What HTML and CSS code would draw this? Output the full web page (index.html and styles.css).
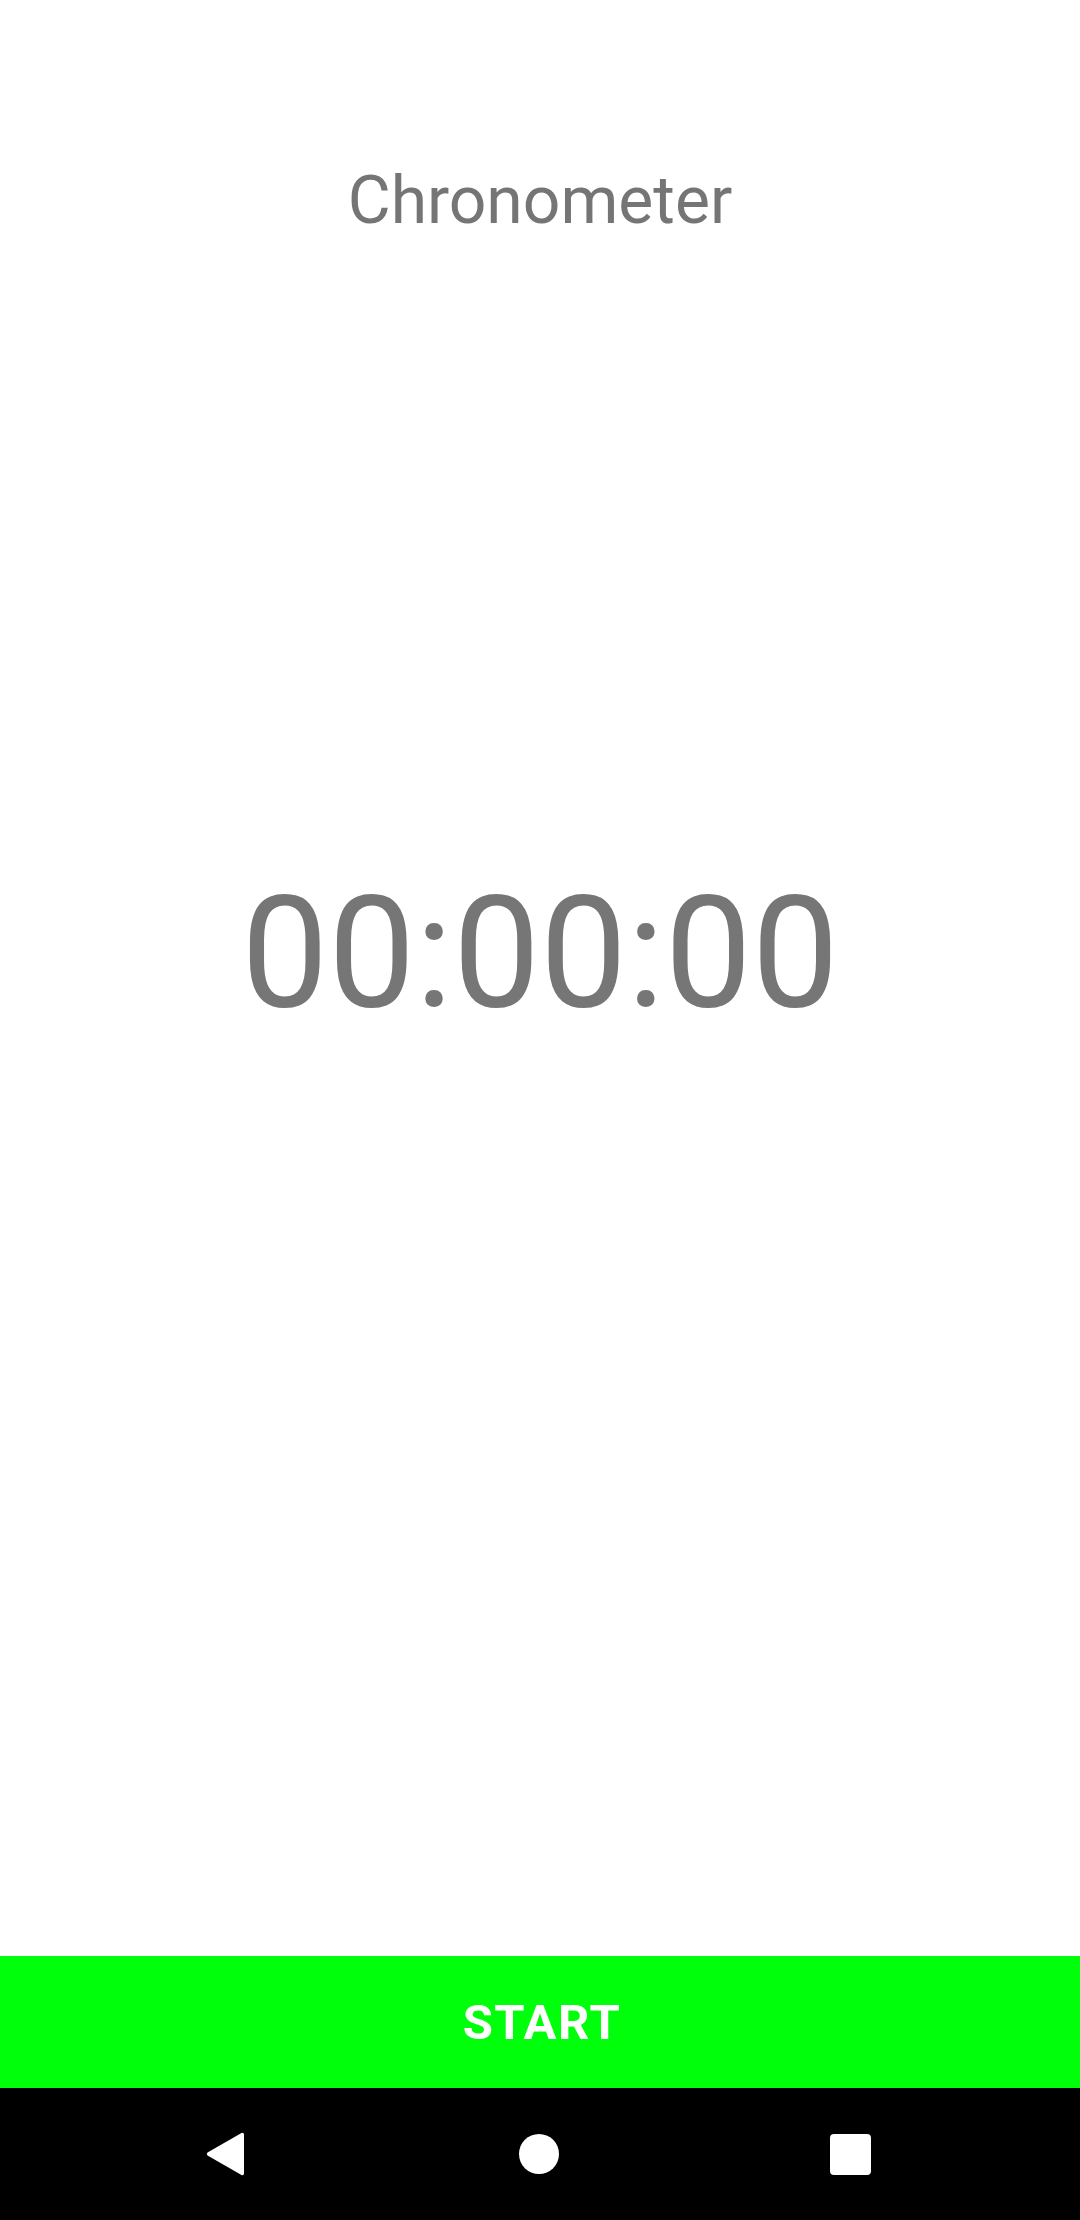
FILE: index.html
```html
<!DOCTYPE html>
<html lang="en">
<head>
<meta charset="utf-8">
<title>Chronometer</title>
<link rel="stylesheet" href="styles.css">
</head>
<body>
<div class="app">
  <header class="title">Chronometer</header>
  <main class="content">
    <div class="timer">00:00:00</div>
  </main>
  <button class="start">START</button>
  <nav class="navbar">
    <svg class="nav-back" viewBox="0 0 38 44" width="38" height="44">
      <path d="M35.5 1 Q38 0 38 3 L38 41 Q38 44 35.5 43 L1.5 23.5 Q0 22 1.5 20.5 Z" fill="#fff"/>
    </svg>
    <svg class="nav-home" viewBox="0 0 40 40" width="40" height="40">
      <circle cx="20" cy="20" r="20" fill="#fff"/>
    </svg>
    <svg class="nav-recent" viewBox="0 0 41 41" width="41" height="41">
      <rect x="0" y="0" width="41" height="41" rx="4" ry="4" fill="#fff"/>
    </svg>
  </nav>
</div>
</body>
</html>
```

FILE: styles.css
```css
html, body {
  margin: 0;
  padding: 0;
  background: #ffffff;
}

.app {
  width: 1080px;
  height: 2220px;
  display: flex;
  flex-direction: column;
  font-family: Roboto, "Noto Sans", sans-serif;
}

.title {
  padding-top: 161px;
  height: 80px;
  line-height: 80px;
  font-size: 66px;
  color: #757575;
  text-align: center;
}

.content {
  flex: 1;
  display: flex;
  flex-direction: column;
  align-items: center;
}

.timer {
  margin-top: 621px;
  height: 182px;
  line-height: 182px;
  font-size: 155px;
  color: #767676;
  text-align: center;
}

.start {
  height: 132px;
  width: 100%;
  border: none;
  margin: 0;
  padding: 0 0 0 4px;
  background: #00ff0a;
  color: #ffffff;
  font-family: Roboto, "Noto Sans", sans-serif;
  font-weight: 700;
  font-size: 49px;
  letter-spacing: 1.5px;
  text-align: center;
}

.navbar {
  height: 132px;
  background: #000000;
  display: flex;
  align-items: center;
}

.nav-back {
  margin-left: 206px;
}

.nav-home {
  margin-left: 275px;
}

.nav-recent {
  margin-left: 271px;
}
```
